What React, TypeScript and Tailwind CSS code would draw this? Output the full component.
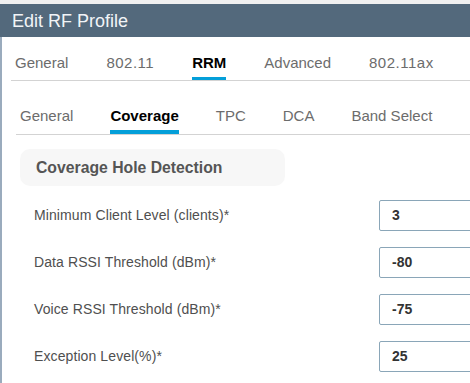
import React from "react";

const tabs1 = ["General", "802.11", "RRM", "Advanced", "802.11ax"];
const tabs2 = ["General", "Coverage", "TPC", "DCA", "Band Select"];
const rows = [
  ["Minimum Client Level (clients)*", "3"],
  ["Data RSSI Threshold (dBm)*", "-80"],
  ["Voice RSSI Threshold (dBm)*", "-75"],
  ["Exception Level(%)*", "25"],
];

export default function App() {
  return (
    <div className="w-[470px] h-[383px] overflow-hidden bg-[#f0f0f0] pt-[4px] font-['Liberation_Sans',Arial,sans-serif]">
      <div className="h-[33px] bg-[#53697c] pl-[12px] flex items-center text-[18px] text-[#f1f4f7] leading-none">
        Edit RF Profile
      </div>
      <div className="bg-white border-l-2 border-[#9aabbd] h-[346px]">
        <div className="ml-[9px] flex gap-[30px] border-b border-[#d3d3d3]">
          {tabs1.map((t) => (
            <div key={t} className="flex flex-col px-[4px] pt-[17px]">
              <span
                className={
                  "text-[15px] leading-[18px] whitespace-nowrap " +
                  (t === "RRM"
                    ? "font-bold text-black"
                    : t.startsWith("802")
                    ? "text-[#6c6c6c] tracking-[0.5px]"
                    : "text-[#6c6c6c]")
                }
              >
                {t}
              </span>
              <div className={"mt-[5px] h-[3px] " + (t === "RRM" ? "bg-[#049fd9]" : "bg-transparent")} />
            </div>
          ))}
        </div>
        <div className="ml-[14px] flex gap-[29px] border-b border-[#d3d3d3]">
          {tabs2.map((t) => (
            <div key={t} className="flex flex-col px-[4px] pt-[26px]">
              <span
                className={
                  "text-[15px] leading-[18px] whitespace-nowrap " +
                  (t === "Coverage" ? "font-bold text-black" : "text-[#6c6c6c]")
                }
              >
                {t}
              </span>
              <div className={"mt-[5px] h-[4px] " + (t === "Coverage" ? "bg-[#049fd9]" : "bg-transparent")} />
            </div>
          ))}
        </div>
        <div className="ml-[18px] mt-[14px] w-[265px] h-[37px] rounded-[10px] bg-[#f7f7f7] flex items-center pl-[16px]">
          <span className="text-[15.75px] font-bold text-[#555555]">Coverage Hole Detection</span>
        </div>
        <div className="mt-[14px] pl-[32px] flex flex-col gap-[16px]">
          {rows.map(([l, v]) => (
            <div key={l} className="flex items-center h-[31px]">
              <span className="w-[345px] shrink-0 text-[14px] tracking-[0.1px] text-[#4f4f4f] whitespace-nowrap">{l}</span>
              <div className="shrink-0 w-[120px] h-[31px] border border-[#8aa6b8] rounded-[2px] pl-[12px] flex items-center text-[14px] font-bold text-[#333333]">
                {v}
              </div>
            </div>
          ))}
        </div>
      </div>
    </div>
  );
}
